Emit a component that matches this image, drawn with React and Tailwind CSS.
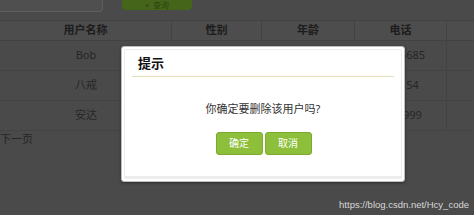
import React from "react";

// sex / age cells sit under the dialog, so they stay empty
const rows = [
  { name: "Bob", phone: "1116685" },
  { name: "八戒", phone: "11154" },
  { name: "安达", phone: "111999" },
];

const font = { fontFamily: '"Noto Sans", "Noto Sans CJK SC", sans-serif' };

const App = () => {
  return (
    <div className="relative w-[474px] h-[215px] overflow-hidden bg-[#4a4a4a] text-[#1c1c1c] text-[11px]" style={font}>
      {/* page under the mask */}
      <div className="flex items-start h-[13px]">
        <div className="w-[103px] h-[12px] border border-t-0 border-l-0 border-[#5e5e5e] bg-[#4f4f4f] rounded-br-sm"></div>
        <div className="ml-[19px] w-[70px] h-[10px] bg-[#45661a] rounded-b-sm flex items-center justify-center gap-1 text-[#2e4410] text-[8px] leading-none overflow-hidden">
          <span>⌕</span>
          <span>查询</span>
        </div>
      </div>

      <div className="mt-[7px]">
        <div className="flex h-[21px] border-y border-[#424242] bg-[#4d4d4d] font-bold">
          <div className="w-[172px] flex items-center justify-center border-r border-[#434343]">用户名称</div>
          <div className="w-[90px] flex items-center justify-center border-r border-[#434343]">性别</div>
          <div className="w-[93px] flex items-center justify-center border-r border-[#434343]">年龄</div>
          <div className="w-[92px] flex items-center justify-center border-r border-[#434343]">电话</div>
          <div className="flex-1"></div>
        </div>
        {rows.map((r) => (
          <div key={r.name} className="flex h-[30px] border-b border-[#434343] text-[#262626]">
            <div className="w-[172px] flex items-center justify-center">{r.name}</div>
            <div className="w-[90px]"></div>
            <div className="w-[93px]"></div>
            <div className="w-[92px] flex items-center justify-center border-r border-[#434343] pl-[5px]">{r.phone}</div>
            <div className="flex-1"></div>
          </div>
        ))}
        <div className="pt-[1px] text-[#262626] leading-[14px]">下一页</div>
      </div>

      <div className="absolute right-[5px] bottom-[6px] text-[9.5px] leading-none text-[#d8d8d8]" style={{ fontFamily: '"Liberation Sans", Arial, sans-serif' }}>
        https://blog.csdn.net/Hcy_code
      </div>

      {/* dialog */}
      <div className="absolute left-[121px] top-[46px] w-[284px] h-[136px] bg-white border border-[#bdbdbd] rounded-[3px] p-[2px] shadow-[0_1px_3px_rgba(0,0,0,0.4)]">
        <div className="h-full border border-[#ececec] border-b-[3px] rounded-[2px] px-[7px] flex flex-col">
          <div className="h-[26px] border-b border-[#e3dfb8] flex items-end pb-[3px] pl-[6px] mt-[1px] text-[13px] font-bold text-[#111]">
            提示
          </div>
          <div className="mt-[25px] text-center text-[11px] leading-[14px] text-[#333]">你确定要删除该用户吗?</div>
          <div className="mt-[16px] flex justify-center gap-[2px] pl-[1px]">
            <button className="w-[47px] h-[23px] bg-[#8dbf3a] border border-[#7aab2c] rounded-[3px] text-white text-[10px]">确定</button>
            <button className="w-[47px] h-[23px] bg-[#8dbf3a] border border-[#7aab2c] rounded-[3px] text-white text-[10px]">取消</button>
          </div>
        </div>
      </div>
    </div>
  );
};

export default App;
